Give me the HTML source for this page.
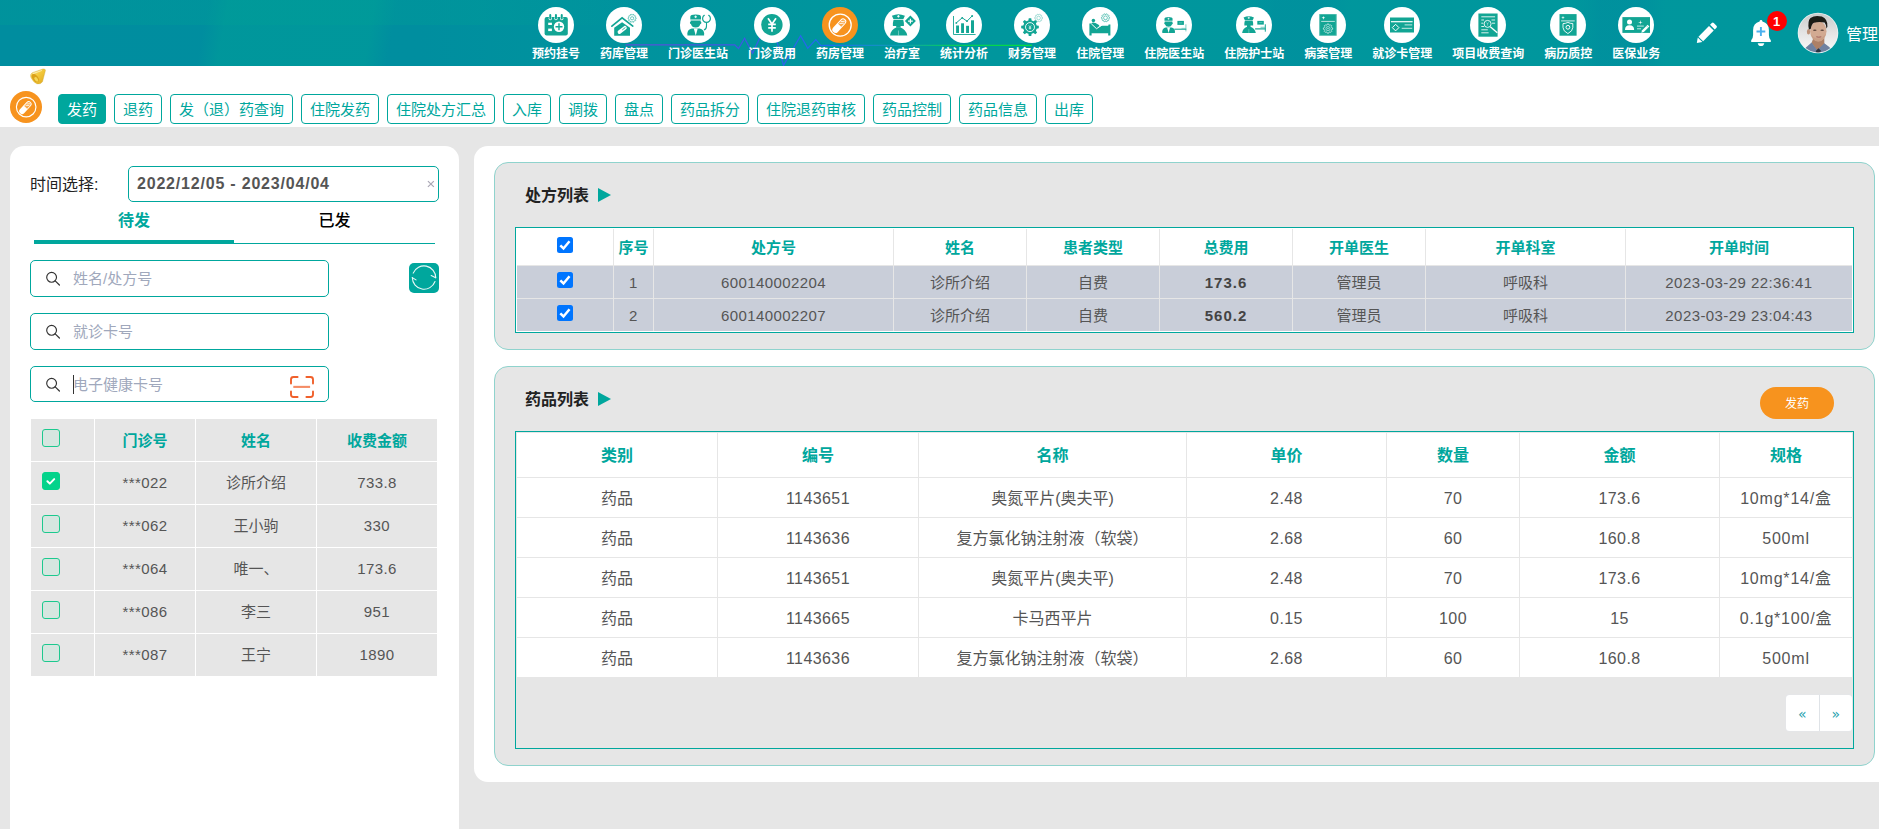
<!DOCTYPE html>
<html lang="zh-CN">
<head>
<meta charset="utf-8">
<title>药房管理 - 发药</title>
<style>
*{box-sizing:border-box;margin:0;padding:0}
html,body{width:1879px;height:829px;overflow:hidden}
body{position:relative;background:#e6e6e6;font-family:"Liberation Sans","Noto Sans CJK SC",sans-serif;font-size:15px;color:#555;line-height:1}
.abs{position:absolute}
/* header */
#hdr{position:absolute;left:0;top:0;width:1879px;height:66px;overflow:hidden;
background:
 linear-gradient(90deg,rgba(0,160,150,.3) 0,rgba(0,160,150,.3) 480px,rgba(0,160,150,0) 640px) 0 0/100% 25px no-repeat,
 linear-gradient(100deg,rgba(0,165,150,0) 205px,rgba(0,165,150,.38) 225px,rgba(0,165,150,.38) 370px,rgba(0,165,150,0) 392px,rgba(0,165,150,0) 100%),
 linear-gradient(90deg,rgba(0,120,160,0) 1240px,rgba(0,120,160,.16) 1275px,rgba(0,120,160,.16) 1315px,rgba(0,120,160,0) 1350px,rgba(0,120,160,0) 1575px,rgba(0,120,160,.18) 1600px,rgba(0,120,160,.18) 1640px,rgba(0,120,160,0) 1665px),
 linear-gradient(90deg,#008d9f 0,#008e9f 420px,#00929e 560px,#00969d 900px,#00979d 1879px);}
#nav{position:absolute;left:522px;top:0;height:66px;display:flex}
.ni{position:relative;padding:0 10px;height:66px;text-align:center}
.ni .c{display:block;width:36px;height:36px;border-radius:50%;background:#fff;margin:7px auto 0}
.ni.on .c{background:#f7931e}
.ni .t{display:block;margin-top:4px;font-size:12px;line-height:14px;font-weight:bold;color:#fff;white-space:nowrap}
.ni svg{display:block;width:36px;height:36px}
/* subnav */
#sub{position:absolute;left:0;top:66px;width:1879px;height:61px;background:#fff}
.sb{position:absolute;top:28px;height:30px;border:1px solid #00a79d;border-radius:4px;color:#00a79d;font-size:15px;line-height:30px;padding:0 8px;white-space:nowrap;background:#fff}
.sb.on{background:#00a79d;color:#fff}
/* panels */
#lp{position:absolute;left:10px;top:146px;width:449px;height:700px;background:#fff;border-radius:14px}
#rp{position:absolute;left:474px;top:146px;width:1420px;height:635.600px;background:#fff;border-radius:14px}
.gp{position:absolute;left:494px;width:1381px;background:#e6e6e6;border:1px solid #8fd3cd;border-radius:14px}
.inp{position:absolute;left:30px;width:299px;height:36px;border:1px solid #00a79d;border-radius:5px;background:#fff}
.inp .ph{position:absolute;left:42px;top:0;line-height:35px;font-size:15px;color:#a0a8bc}
table{border-collapse:separate;border-spacing:0;table-layout:fixed}
td,th{text-align:center;vertical-align:middle;white-space:nowrap;overflow:hidden}

#lt td,#lt th{height:43px;background:#e6e6e6;border-right:1px solid #fff;border-bottom:1px solid #fff;font-size:15px;color:#555;font-weight:normal;position:relative}
#lt th{color:#00a79d;font-weight:bold;height:43px;padding-top:1px}
#lt td{padding-bottom:2px}
#lt th .lcb{top:10px}
#lt tr>*:last-child{border-right:0}
#lt tr:last-child td{border-bottom:0;height:42px}
.lcb{top:10px}
#lt tr>*:first-child{border-left:0}
#lt tr>*:last-child{border-right:0}
#lt tr.h th{border-top:0}
#lt tr:last-child td{border-bottom:0;height:42px}
.lcb{position:absolute;left:11px;top:10px;width:18px;height:18px;border:1px solid #1cc98e;border-radius:3px;background:#d6e6e0}
.lcb.on{background:#04d38b;border-color:#04d38b}
.lcb svg{position:absolute;left:-1px;top:-1px}

.ttl{font-size:16px;line-height:20px;font-weight:bold;color:#222}
.tri{width:0;height:0;border-left:13px solid #00a79d;border-top:7.5px solid transparent;border-bottom:7.5px solid transparent}
.tw{border:1px solid #00a79d;background:#fff}
#rx th{height:37px;background:#fff;color:#00a79d;font-weight:bold;font-size:15px;border-right:1px solid #e6e6e6;border-bottom:1px solid #e6e6e6;position:relative}
#rx td{height:33px;background:#c9ced9;color:#555;font-size:15px;border-right:1px solid #e6e6e6;border-bottom:1px solid #e6e6e6;position:relative}
#rx tr>*:last-child,#dg tr>*:last-child{border-right:0}
#rx tr:last-child td{border-bottom:0;height:32px}
#rx td b{color:#444}
.ncb{position:absolute;left:40px;top:6px;width:16px;height:16px;border-radius:2.5px;background:#0075ff}
#rx th .ncb{top:8px}
.ncb svg{display:block}
#dg th{padding-top:1px;height:45px;background:#fff;color:#00a79d;font-weight:bold;font-size:16px;border-right:1px solid #e6e6e6;border-bottom:1px solid #e6e6e6}
#dg td{padding-top:2px;height:40px;background:#fff;color:#555;font-size:16px;border-right:1px solid #e6e6e6;border-bottom:1px solid #e6e6e6}
#dg tr:last-child td{border-bottom:0;height:39px;padding-top:2px}
.pg{width:66px;height:36.500px;background:#fff;border-radius:3.500px;display:flex;box-shadow:0 0 0 .5px #e3e6ea}
.pg span{flex:1;text-align:center;line-height:39px;font-size:14px;color:#1f9fae;font-family:"DejaVu Sans","Liberation Sans",sans-serif;font-weight:normal}
.pg span+span{border-left:1px solid #dfe3e7}

td.n{letter-spacing:.42px}
#dg td.n:last-child{letter-spacing:.8px}
#rx td.n b{letter-spacing:1px}
</style>
</head>
<body>
<div id="hdr">
<svg class="abs" style="left:0;top:0" width="1879" height="66" viewBox="0 0 1879 66"><defs><linearGradient id="eg" gradientUnits="userSpaceOnUse" x1="625" y1="0" x2="1032" y2="0"><stop offset="0" stop-color="#5b4fd8"/><stop offset=".3" stop-color="#3e56e6"/><stop offset=".5" stop-color="#1d6cf0"/><stop offset=".68" stop-color="#0fa0b0"/><stop offset=".8" stop-color="#06cc5c"/><stop offset="1" stop-color="#04e03c"/></linearGradient></defs><path d="M625.500 44.900H734.700L738.500 48.500L744.600 38.300L752.600 53.300L759.600 38.300L766 24L777.200 42.100L783.500 65.400L800.600 35.700L807.800 48.200L815.800 39.600L820.900 45.600L826 45.300H1032" fill="none" stroke="url(#eg)" stroke-width="1.200" stroke-linejoin="miter"/></svg>
<div id="nav">
<div class="ni"><span class="c"><svg viewBox="0 0 36 36"><!--ic0--><rect x="6.600" y="10.100" width="23.200" height="18.300" rx="2" fill="#12a594"/><g fill="#fff"><rect x="10.600" y="9.500" width="3.300" height="3.700" rx="1.650"/><rect x="16.300" y="9.500" width="3.300" height="3.700" rx="1.650"/><rect x="22.100" y="9.500" width="3.300" height="3.700" rx="1.650"/></g><g fill="#12a594"><rect x="11.250" y="6.900" width="2" height="5.500" rx="1"/><rect x="16.950" y="6.900" width="2" height="5.500" rx="1"/><rect x="22.750" y="6.900" width="2" height="5.500" rx="1"/></g><rect x="10.200" y="15.700" width="3.700" height="2.300" fill="#fff"/><rect x="10.200" y="21.600" width="3.700" height="2.500" fill="#fff"/><circle cx="21" cy="19.800" r="5.200" fill="#fff"/><path d="M21 16.300v7M17.500 19.800h7" stroke="#12a594" stroke-width="1.400"/></svg></span><span class="t">预约挂号</span></div>
<div class="ni"><span class="c"><svg viewBox="0 0 36 36"><!--ic1--><path d="M5.900 19.100L16.100 10.900L26.800 19.100" fill="none" stroke="#12a594" stroke-width="1.700" stroke-linecap="round"/><path d="M16.100 15.300L24 20.700V28.700H8.200V20.700Z" fill="#12a594"/><g transform="rotate(-38 16.150 23)"><rect x="10.900" y="21.100" width="10.600" height="3.800" rx="1.900" fill="#fff"/><path d="M16.300 23h4" stroke="#12a594" stroke-width=".8"/></g><path d="M29.44 10.66L30.17 10.84L30.17 11.76L29.44 11.94L29.18 12.75L29.67 13.32L29.12 14.07L28.43 13.78L27.74 14.28L27.8 15.03L26.92 15.32L26.53 14.67L25.67 14.67L25.28 15.32L24.4 15.03L24.46 14.28L23.77 13.78L23.08 14.07L22.53 13.32L23.02 12.75L22.76 11.94L22.03 11.76L22.03 10.84L22.76 10.66L23.02 9.85L22.53 9.28L23.08 8.53L23.77 8.82L24.46 8.32L24.4 7.57L25.28 7.28L25.67 7.93L26.53 7.93L26.92 7.28L27.8 7.57L27.74 8.32L28.43 8.82L29.12 8.53L29.67 9.28L29.18 9.85Z" fill="#fff" stroke="#12a594" stroke-width=".7" opacity=".85"/><circle cx="26.100" cy="11.300" r="1.600" fill="none" stroke="#12a594" stroke-width=".7" opacity=".85"/></svg></span><span class="t">药库管理</span></div>
<div class="ni"><span class="c"><svg viewBox="0 0 36 36"><!--ic2--><path d="M10.300 12.500V9.700Q10.300 7.400 15.650 7.400Q21 7.400 21 9.700V12.500Z" fill="#12a594"/><path d="M15.650 8.500v2.600M14.350 9.800h2.600" stroke="#fff" stroke-width=".9"/><path d="M10.600 13.400H20.700V14.800Q21.700 15 21.300 16.300Q21 17.100 20.400 17Q19.400 20.500 15.650 20.500Q11.900 20.500 10.900 17Q10.300 17.100 10 16.300Q9.600 15 10.600 14.800Z" fill="#12a594"/><path d="M7.400 28.600V26.300Q7.400 22.800 11.800 21.500H19.700Q24.100 22.800 24.100 26.300V28.600Z" fill="#12a594"/><path d="M13.800 21.400L15.750 28.700L17.700 21.400Z" fill="#fff"/><path d="M24.300 8.300A3.900 3.900 0 1 0 28.700 8.300" fill="none" stroke="#12a594" stroke-width="1.200" stroke-linecap="round"/><path d="M26.500 15.400V19Q26.500 22.200 23.900 23" fill="none" stroke="#12a594" stroke-width="1.100"/></svg></span><span class="t">门诊医生站</span></div>
<div class="ni"><span class="c"><svg viewBox="0 0 36 36"><!--ic3--><circle cx="17.900" cy="17.800" r="10.700" fill="#12a594"/><path d="M14 11.300L18 17L22 11.300M18 17V24.800M14.200 17.400h7.600M14.200 20.900h7.600" stroke="#fff" stroke-width="1.700" fill="none"/></svg></span><span class="t">门诊费用</span></div>
<div class="ni on"><span class="c"><svg viewBox="0 0 36 36"><!--ic4--><circle cx="18.200" cy="18.100" r="11" fill="none" stroke="#fff" stroke-width="1.300"/><g transform="rotate(-47 17.300 18.700)"><rect x="8.600" y="15.500" width="17.400" height="6.400" rx="3.200" fill="#fff"/><path d="M17.800 16.500H22.800Q25 16.500 25 18.700Q25 20.900 22.800 20.900H17.800Z" fill="#f7931e" opacity=".8"/><path d="M19.300 17.600l2.600 2.400M21.600 17.300l2.300 2.100" stroke="#fff" stroke-width=".8" stroke-linecap="round"/></g></svg></span><span class="t">药房管理</span></div>
<div class="ni"><span class="c"><svg viewBox="0 0 36 36"><!--ic5--><path d="M7.900 8.800Q14.400 5.800 20.900 8.800L19.400 12.100H9.400Z" fill="#12a594"/><path d="M14.400 8v2.600M13.100 9.300h2.600" stroke="#fff" stroke-width=".9"/><path d="M9.600 12.800H19.200Q20.200 16 19.900 18.900H16.600V20.800H12.200V18.900H8.900Q8.600 16 9.600 12.800Z" fill="#12a594"/><path d="M6.100 28.400Q7 22.600 12.200 20.600H16.600Q21.800 22.600 23.300 28.400Z" fill="#12a594"/><path d="M14.500 23.500v4.900" stroke="#fff" stroke-width=".45" opacity=".8"/><path d="M26.400 8.600L31.900 14.100L26.400 19.600L20.900 14.100Z" fill="#12a594"/><path d="M26.400 11.700v4.800M24 14.100h4.800" stroke="#fff" stroke-width="1.200"/></svg></span><span class="t">治疗室</span></div>
<div class="ni"><span class="c"><svg viewBox="0 0 36 36"><!--ic6--><path d="M7.500 9V27.500H29.600" fill="none" stroke="#12a594" stroke-width=".9"/><g fill="#12a594"><rect x="10.100" y="18.500" width="2.900" height="7.500"/><rect x="15.100" y="16.300" width="2.900" height="9.700"/><rect x="20.100" y="18.800" width="2.900" height="7.200"/><rect x="25" y="13.300" width="3" height="12.700"/><circle cx="10.300" cy="15.900" r=".9"/><circle cx="16.200" cy="10.800" r=".9"/><circle cx="21" cy="14.200" r=".9"/><circle cx="26.100" cy="9" r="1"/></g><path d="M10.300 15.900L16.200 10.800L21 14.200L26.100 9" fill="none" stroke="#12a594" stroke-width="1"/></svg></span><span class="t">统计分析</span></div>
<div class="ni"><span class="c"><svg viewBox="0 0 36 36"><!--ic7--><path d="M22.71 18.49L24.81 18.85L24.81 21.35L22.71 21.71L21.88 23.71L23.12 25.44L21.34 27.22L19.61 25.98L17.61 26.81L17.25 28.91L14.75 28.91L14.39 26.81L12.39 25.98L10.66 27.22L8.88 25.44L10.12 23.71L9.29 21.71L7.19 21.35L7.19 18.85L9.29 18.49L10.12 16.49L8.88 14.76L10.66 12.98L12.39 14.22L14.39 13.39L14.75 11.29L17.25 11.29L17.61 13.39L19.61 14.22L21.34 12.98L23.12 14.76L21.88 16.49Z" fill="#12a594"/><circle cx="16" cy="20.100" r="4.500" fill="none" stroke="#fff" stroke-width=".9"/><path d="M14.700 18.300L16 20.200L17.300 18.300M16 20.200V22.600M14.800 20.400h2.400M14.800 21.500h2.400" stroke="#fff" stroke-width=".6" fill="none" opacity=".9"/><path d="M27.84 10.38L28.48 10.56L28.48 11.44L27.84 11.62L27.59 12.41L27.99 12.92L27.48 13.63L26.86 13.41L26.19 13.89L26.22 14.55L25.38 14.82L25.01 14.27L24.19 14.27L23.82 14.82L22.98 14.55L23.01 13.89L22.34 13.41L21.72 13.63L21.21 12.92L21.61 12.41L21.36 11.62L20.72 11.44L20.72 10.56L21.36 10.38L21.61 9.59L21.21 9.08L21.72 8.37L22.34 8.59L23.01 8.11L22.98 7.45L23.82 7.18L24.19 7.73L25.01 7.73L25.38 7.18L26.22 7.45L26.19 8.11L26.86 8.59L27.48 8.37L27.99 9.08L27.59 9.59Z" fill="#fff" stroke="#12a594" stroke-width=".6" opacity=".6"/><circle cx="24.600" cy="11" r="1.800" fill="none" stroke="#12a594" stroke-width=".6" opacity=".6"/></svg></span><span class="t">财务管理</span></div>
<div class="ni"><span class="c"><svg viewBox="0 0 36 36"><!--ic8--><path d="M7.400 16.400H9L10.800 15.400L13.500 15.900L17.400 18.200L16.500 19.700L20.400 18.800H26.200L26.600 17.600H28.400V28.400H26.200V26.200H9.600V28.400H7.400Z" fill="#12a594"/><path d="M9.300 16.800L14.500 21.700L19.100 18.700" fill="none" stroke="#fff" stroke-width="1"/><circle cx="11.400" cy="13.500" r="1.750" fill="#12a594"/><path d="M26.84 10.16L27.57 10.34L27.57 11.26L26.84 11.44L26.58 12.25L27.07 12.82L26.52 13.57L25.83 13.28L25.14 13.78L25.2 14.53L24.32 14.82L23.93 14.17L23.07 14.17L22.68 14.82L21.8 14.53L21.86 13.78L21.17 13.28L20.48 13.57L19.93 12.82L20.42 12.25L20.16 11.44L19.43 11.26L19.43 10.34L20.16 10.16L20.42 9.35L19.93 8.78L20.48 8.03L21.17 8.32L21.86 7.82L21.8 7.07L22.68 6.78L23.07 7.43L23.93 7.43L24.32 6.78L25.2 7.07L25.14 7.82L25.83 8.32L26.52 8.03L27.07 8.78L26.58 9.35Z" fill="#fff" stroke="#12a594" stroke-width=".7" opacity=".85"/><circle cx="23.500" cy="10.800" r="1.900" fill="none" stroke="#12a594" stroke-width=".7" opacity=".85"/></svg></span><span class="t">住院管理</span></div>
<div class="ni"><span class="c"><svg viewBox="0 0 36 36"><!--ic9--><g transform="translate(.71 4.31) scale(.755)"><path d="M10.300 12.500V9.700Q10.300 7.400 15.650 7.400Q21 7.400 21 9.700V12.500Z" fill="#12a594"/><path d="M15.650 8.500v2.600M14.350 9.800h2.600" stroke="#fff" stroke-width=".9"/><path d="M10.600 13.400H20.700V14.800Q21.700 15 21.300 16.300Q21 17.100 20.400 17Q19.400 20.500 15.650 20.500Q11.900 20.500 10.900 17Q10.300 17.100 10 16.300Q9.600 15 10.600 14.800Z" fill="#12a594"/><path d="M7.400 28.600V26.300Q7.400 22.800 11.800 21.500H19.700Q24.100 22.800 24.100 26.300V28.600Z" fill="#12a594"/><path d="M13.800 21.400L15.750 28.700L17.700 21.400Z" fill="#fff"/></g><rect x="21.400" y="13.900" width="6.500" height="4" fill="#12a594"/><path d="M23 15.900h3.300" stroke="#fff" stroke-width=".5" opacity=".6"/><path d="M18.300 22.200H30.300" stroke="#12a594" stroke-width="1.100"/><path d="M29.900 17.300V24.400" stroke="#12a594" stroke-width=".9" opacity=".6"/><path d="M25.500 21.300h4" stroke="#12a594" stroke-width=".8" opacity=".45"/></svg></span><span class="t">住院医生站</span></div>
<div class="ni"><span class="c"><svg viewBox="0 0 36 36"><!--ic10--><g transform="translate(1.24 3.38) scale(.8)"><path d="M7.900 8.800Q14.400 5.800 20.900 8.800L19.400 12.100H9.400Z" fill="#12a594"/><path d="M14.400 8v2.600M13.100 9.300h2.600" stroke="#fff" stroke-width=".9"/><path d="M9.600 12.800H19.200Q20.200 16 19.900 18.900H16.600V20.800H12.200V18.900H8.900Q8.600 16 9.600 12.800Z" fill="#12a594"/><path d="M6.100 28.400Q7 22.600 12.200 20.600H16.600Q21.800 22.600 23.300 28.400Z" fill="#12a594"/><path d="M14.500 23.500v4.900" stroke="#fff" stroke-width=".45" opacity=".8"/></g><rect x="21.300" y="13.900" width="6.500" height="3.700" fill="#12a594"/><path d="M23 15.700h3.300" stroke="#fff" stroke-width=".5" opacity=".6"/><path d="M19.100 21.900H29.600" stroke="#12a594" stroke-width="1.200"/><path d="M29.300 17.300V24.700" stroke="#12a594" stroke-width="1"/><path d="M24.500 20.400h4.500" stroke="#12a594" stroke-width="1.400" opacity=".45"/></svg></span><span class="t">住院护士站</span></div>
<div class="ni"><span class="c"><svg viewBox="0 0 36 36"><!--ic11--><rect x="9.300" y="7.100" width="17.300" height="21.600" fill="#12a594"/><rect x="9.900" y="7.700" width="16.100" height="20.400" fill="none" stroke="#fff" stroke-width=".4" opacity=".35"/><path d="M13.4 8.9L13.83 10.37L15.3 10.8L13.83 11.23L13.4 12.7L12.97 11.23L11.5 10.8L12.97 10.37Z" fill="#fff"/><path d="M11.200 14.400H24.800" stroke="#fff" stroke-width=".9" opacity=".8"/><path d="M21.7 20.71L22.65 20.94L22.65 22.26L21.7 22.49L21.24 23.59L21.76 24.42L20.82 25.36L19.99 24.84L18.89 25.3L18.66 26.25L17.34 26.25L17.11 25.3L16.01 24.84L15.18 25.36L14.24 24.42L14.76 23.59L14.3 22.49L13.35 22.26L13.35 20.94L14.3 20.71L14.76 19.61L14.24 18.78L15.18 17.84L16.01 18.36L17.11 17.9L17.34 16.95L18.66 16.95L18.89 17.9L19.99 18.36L20.82 17.84L21.76 18.78L21.24 19.61Z" fill="none" stroke="#fff" stroke-width=".7" opacity=".85"/><circle cx="18" cy="21.600" r="2.100" fill="none" stroke="#fff" stroke-width=".6" opacity=".85"/><path d="M18 20.600L19 21.600L18 22.600L17 21.600Z" fill="#fff" opacity=".6"/></svg></span><span class="t">病案管理</span></div>
<div class="ni"><span class="c"><svg viewBox="0 0 36 36"><!--ic12--><rect x="6" y="10.500" width="24" height="15" fill="#12a594"/><path d="M6.900 14.700H28.600" stroke="#fff" stroke-width="1.200"/><path d="M11.600 17.300L14.900 20.600L11.600 23.900L8.300 20.600Z" fill="none" stroke="#fff" stroke-width="1"/><path d="M20.600 17.900H28.200M17.700 21.300H28.200" stroke="#fff" stroke-width="1" opacity=".75"/></svg></span><span class="t">就诊卡管理</span></div>
<div class="ni"><span class="c"><svg viewBox="0 0 36 36"><!--ic13--><rect x="8.400" y="6.500" width="19.200" height="23.200" fill="#12a594"/><path d="M11.300 9.800H25.100M11.300 13H14M21.500 13H25.100M11.300 16.200H13.300M22 16.200H25.100M11.300 19.500H14M11.300 22.800H17.800M11.300 25.800H18.600" stroke="#fff" stroke-width="1" opacity=".85"/><circle cx="17.600" cy="16.900" r="3.500" fill="#12a594" stroke="#fff" stroke-width=".9"/><path d="M16.700 15.500L17.600 16.900L18.500 15.500M17.600 16.900V18.700" stroke="#fff" stroke-width=".5" fill="none" opacity=".8"/><path d="M20.300 19.800L27.300 25.700" stroke="#fff" stroke-width="1.300"/></svg></span><span class="t">项目收费查询</span></div>
<div class="ni"><span class="c"><svg viewBox="0 0 36 36"><!--ic14--><rect x="9.500" y="7.100" width="17.100" height="21.600" fill="#12a594"/><path d="M13 8.7L13.43 10.17L14.9 10.6L13.43 11.03L13 12.5L12.57 11.03L11.1 10.6L12.57 10.17Z" fill="#fff"/><path d="M11.100 13.900H24.700" stroke="#fff" stroke-width="1.100" opacity=".75"/><path d="M17.900 15.400Q20.300 16.600 22.800 16.600V20.500Q22.800 24 17.900 26.600Q13 24 13 20.500V16.600Q15.500 16.600 17.900 15.400Z" fill="none" stroke="#fff" stroke-width=".9"/><circle cx="17.900" cy="20.300" r="1.900" fill="none" stroke="#fff" stroke-width="1"/></svg></span><span class="t">病历质控</span></div>
<div class="ni"><span class="c"><svg viewBox="0 0 36 36"><!--ic15--><rect x="4.400" y="10.100" width="27.600" height="15.800" fill="#12a594"/><circle cx="11.500" cy="15.100" r="2.500" fill="#fff"/><path d="M7 22.900Q7 18.300 11.550 18.300Q16.100 18.300 16.100 22.900Z" fill="#fff"/><path d="M22.4 13L22.79 15.01L24.8 15.4L22.79 15.79L22.4 17.8L22.01 15.79L20 15.4L22.01 15.01Z" fill="#fff"/><path d="M19 19.100H25.800M19 21.800H23.100" stroke="#fff" stroke-width="1" opacity=".75"/><path d="M23.300 25.700L24.100 23.200L29.600 17.700L31.400 19.500L25.900 25Z" fill="#fff"/><path d="M28.500 18.800L30.300 20.600" stroke="#12a594" stroke-width=".4"/></svg></span><span class="t">医保业务</span></div>
</div>

<svg class="abs" style="left:1690px;top:16px" width="32" height="32" viewBox="0 0 32 32"><g transform="translate(6.800 27.100) rotate(-45.600)" fill="#fff"><path d="M0 0L4.700 -3.200V3.200Z"/><path d="M5.700 -3.300H20.800V3.300H5.700Z"/><path d="M22.300 -3.300H24.800Q26.200 -3.300 26.200 -1.900V1.900Q26.200 3.300 24.800 3.300H22.300Z"/></g></svg>
<svg class="abs" style="left:1751px;top:20px" width="20" height="27" viewBox="0 0 20 27"><path d="M10 0Q11.400 0 11.400 1.400Q17.900 3 17.900 10V15Q17.900 18.300 19.800 20.300V22H.2V20.300Q2.100 18.300 2.100 15V10Q2.100 3 8.600 1.400Q8.600 0 10 0Z" fill="#fff"/><path d="M6.700 23.200H13.300Q12.600 26.100 10 26.100Q7.400 26.100 6.700 23.200Z" fill="#fff"/><path d="M9.900 7.100v8.900M5.500 11.500h8.800" stroke="#4bb0ee" stroke-width="1.900"/></svg>
<div class="abs" style="left:1767px;top:11px;width:20px;height:20px;border-radius:50%;background:#ff0000;color:#fff;font-weight:bold;font-size:13px;line-height:22px;text-align:center;padding-right:1px">1</div>
<svg class="abs" style="left:1797px;top:12px" width="42" height="42" viewBox="0 0 42 42"><defs><clipPath id="av"><circle cx="21" cy="21" r="19.500"/></clipPath><linearGradient id="avg" x1="0" y1="0" x2="0" y2="1"><stop offset="0" stop-color="#c9c9c9"/><stop offset=".5" stop-color="#e4e4e4"/><stop offset="1" stop-color="#fcfcfc"/></linearGradient><filter id="avb" x="-10%" y="-10%" width="120%" height="120%"><feGaussianBlur stdDeviation=".45"/></filter></defs><circle cx="21" cy="21" r="20.300" fill="#e8f4f5"/><g clip-path="url(#av)"><rect width="42" height="42" fill="url(#avg)"/><g filter="url(#avb)"><path d="M16.400 26h10.900v6l-6.800 7.500l-6 -8.500Z" fill="#ad8066"/><path d="M4 42L8.900 35.400L14.600 30.400L20.200 38.300L27.300 31.300L32.300 35L37.500 42Z" fill="#6f81a0"/><path d="M18.800 39L21.400 36.300L24 38.800L22.500 42H19Z" fill="#2b3442"/><ellipse cx="11.500" cy="19.800" rx="1.600" ry="2.800" fill="#bd9076"/><ellipse cx="21.300" cy="19.300" rx="8.200" ry="10.200" fill="#d2aa92"/><path d="M14 22Q15 28.500 21.300 29.500Q27.500 28.500 28.800 22Q25 26.500 21.300 26.500Q17 26.500 14 22Z" fill="#c49a82" opacity=".7"/><path d="M11.900 17.500Q10.300 9 13.500 6Q18 2.800 24.800 4.600Q30.800 6.800 30.400 14.800L29.500 16.500Q29.200 12.500 27.600 10.600Q22 9.300 17 10.800Q14.500 12 13.700 17Z" fill="#1c1a18"/><ellipse cx="17.800" cy="18.300" rx="1.800" ry=".7" fill="#4a3730" opacity=".85"/><ellipse cx="25.200" cy="18.300" rx="1.800" ry=".7" fill="#4a3730" opacity=".85"/><path d="M19.300 24.800Q21.800 25.600 24.300 24.800" stroke="#a0605a" stroke-width="1" fill="none"/></g></g></svg>
<div class="abs" style="left:1846px;top:23px;font-size:16px;line-height:24px;color:#fff;white-space:nowrap">管理员</div>
</div>
<div id="sub">
<svg class="abs" style="left:29px;top:2px" width="18" height="17" viewBox="0 0 18 17"><defs><linearGradient id="bg1" x1="0" y1="0" x2="1" y2="1"><stop offset="0" stop-color="#fbe79a"/><stop offset=".45" stop-color="#f3c93c"/><stop offset="1" stop-color="#e0a71c"/></linearGradient></defs><path d="M15.900 1.300Q17 1.800 16.200 3.500L13.500 13.800Q11.500 16.600 7.800 15.800Q4 14 1.800 9.200Q.8 6.200 3.200 4.700L13.800 1Q15 .7 15.900 1.300Z" fill="url(#bg1)" stroke="#c9a53c" stroke-width=".5" stroke-opacity=".7"/><ellipse cx="6.300" cy="10" rx="4.700" ry="2.700" transform="rotate(52 6.300 10)" fill="#dba21a"/><ellipse cx="7.300" cy="11.300" rx="2.600" ry="1.500" transform="rotate(52 7.300 11.300)" fill="#f5d655"/><path d="M4.300 5.500L12.500 2.600" stroke="#fdf3c4" stroke-width="1" stroke-linecap="round" opacity=".8"/></svg>
<div class="abs" style="left:10px;top:25px;width:32px;height:32px;border-radius:50%;background:#f7931e"><svg width="32" height="32" viewBox="0 0 36 36"><circle cx="18.200" cy="18.100" r="11" fill="none" stroke="#fff" stroke-width="1.300"/><g transform="rotate(-47 17.300 18.700)"><rect x="8.600" y="15.500" width="17.400" height="6.400" rx="3.200" fill="#fff"/><path d="M17.800 16.500H22.800Q25 16.500 25 18.700Q25 20.900 22.800 20.900H17.800Z" fill="#f7931e" opacity=".8"/><path d="M19.300 17.600l2.600 2.400M21.600 17.300l2.300 2.100" stroke="#fff" stroke-width=".8" stroke-linecap="round"/></g></svg></div>
<div class="sb on" style="left:58px">发药</div>
<div class="sb" style="left:114px">退药</div>
<div class="sb" style="left:170px">发（退）药查询</div>
<div class="sb" style="left:301px">住院发药</div>
<div class="sb" style="left:387px">住院处方汇总</div>
<div class="sb" style="left:503px">入库</div>
<div class="sb" style="left:559px">调拨</div>
<div class="sb" style="left:615px">盘点</div>
<div class="sb" style="left:671px">药品拆分</div>
<div class="sb" style="left:757px">住院退药审核</div>
<div class="sb" style="left:873px">药品控制</div>
<div class="sb" style="left:959px">药品信息</div>
<div class="sb" style="left:1045px">出库</div>
</div>
<div id="lp">
<div class="abs" style="left:20px;top:30px;font-size:16px;line-height:18px;color:#222">时间选择:</div>
<div class="abs" style="left:118px;top:20px;width:311px;height:36px;border:1px solid #00a79d;border-radius:5px;background:#fff">
 <span class="abs" style="left:8px;top:0;line-height:34px;font-size:16px;font-weight:bold;color:#555;letter-spacing:.8px">2022/12/05 - 2023/04/04</span>
 <span class="abs" style="left:296px;top:0;width:12px;line-height:34px;font-size:15px;font-weight:normal;color:#a9a6b4;text-align:center;transform:scaleY(.92)">×</span>
</div>
<div class="abs" style="left:24px;top:63px;width:200px;text-align:center;font-size:16px;line-height:24px;font-weight:bold;color:#00a79d">待发</div>
<div class="abs" style="left:224px;top:63px;width:201px;text-align:center;font-size:16px;line-height:24px;font-weight:500;color:#000">已发</div>
<div class="abs" style="left:24px;top:97px;width:401px;height:1px;background:#00a79d"></div>
<div class="abs" style="left:24px;top:94px;width:200px;height:4px;background:#00a79d"></div>
<div class="inp" style="left:20px;top:114px;height:37px"><svg class="abs" style="left:14px;top:10px" width="16" height="16" viewBox="0 0 16 16"><circle cx="6.600" cy="6.300" r="4.900" fill="none" stroke="#333" stroke-width="1.150"/><path d="M10.200 9.900L14.400 14" stroke="#333" stroke-width="1.200" stroke-linecap="round"/></svg><span class="ph">姓名/处方号</span></div>
<div class="inp" style="left:20px;top:167px;height:37px"><svg class="abs" style="left:14px;top:10px" width="16" height="16" viewBox="0 0 16 16"><circle cx="6.600" cy="6.300" r="4.900" fill="none" stroke="#333" stroke-width="1.150"/><path d="M10.200 9.900L14.400 14" stroke="#333" stroke-width="1.200" stroke-linecap="round"/></svg><span class="ph">就诊卡号</span></div>
<div class="inp" style="left:20px;top:220px"><svg class="abs" style="left:14px;top:10px" width="16" height="16" viewBox="0 0 16 16"><circle cx="6.600" cy="6.300" r="4.900" fill="none" stroke="#333" stroke-width="1.150"/><path d="M10.200 9.900L14.400 14" stroke="#333" stroke-width="1.200" stroke-linecap="round"/></svg><span class="abs" style="left:42px;top:8px;width:1px;height:19px;background:#333"></span><span class="ph">电子健康卡号</span>
 <svg class="abs" style="left:258px;top:8px" width="27" height="24" viewBox="0 0 27 24" fill="none" stroke="#f0602b" stroke-width="1.900" stroke-linecap="round" stroke-linejoin="round"><path d="M2 8.600V4.500Q2 2 4.500 2H8.600M17.400 2h4.100Q24 2 24 4.500V8.600M24 16.400v3.100Q24 22 21.500 22H17.400M8.600 22H4.500Q2 22 2 19.500V16.400"/><path d="M4.300 11.900h16.800" opacity=".72" stroke-linecap="butt" stroke-width="2.100"/></svg>
</div>
<div class="abs" style="left:399px;top:117px;width:30px;height:30px;border-radius:5px;background:#00a79d">
 <svg width="30" height="30" viewBox="0 0 30 30" fill="none" stroke="#fff" stroke-width="1.100" stroke-linecap="round" stroke-linejoin="round" opacity=".92"><path d="M4.200 10.100A11.700 11.700 0 0 1 26.700 14.800"/><path d="M26 18.500A11.700 11.700 0 0 1 3.300 14.600"/><path d="M22.200 12.500L26.700 14.800"/><path d="M3.300 14.600L7 16.900"/></svg>
</div>
<table id="lt" class="abs" style="left:21px;top:273px;width:406px"><colgroup><col style="width:64px"><col style="width:101px"><col style="width:121px"><col style="width:120px"></colgroup><tr class="h"><th><span class="lcb"></span></th><th>门诊号</th><th>姓名</th><th>收费金额</th></tr><tr><td><span class="lcb on"><svg width="18" height="18" viewBox="0 0 18 18"><path d="M5.400 9.300l2.400 2.300l4.400 -4.500" fill="none" stroke="#fff" stroke-width="2" stroke-linecap="round" stroke-linejoin="round"/></svg></span></td><td class="n">***022</td><td>诊所介绍</td><td class="n">733.8</td></tr><tr><td><span class="lcb"></span></td><td class="n">***062</td><td>王小驹</td><td class="n">330</td></tr><tr><td><span class="lcb"></span></td><td class="n">***064</td><td>唯一、</td><td class="n">173.6</td></tr><tr><td><span class="lcb"></span></td><td class="n">***086</td><td>李三</td><td class="n">951</td></tr><tr><td><span class="lcb"></span></td><td class="n">***087</td><td>王宁</td><td class="n">1890</td></tr></table></div>
<div id="rp"></div>
<div class="gp" style="top:162px;height:188px"></div>
<div class="abs ttl" style="left:525px;top:186px">处方列表</div><div class="abs tri" style="left:598px;top:187.500px"></div>
<div class="abs tw" style="left:515px;top:227px;width:1339px;height:106px"></div>
<table id="rx" class="abs" style="left:517px;top:229px;width:1335px"><colgroup><col style="width:97px"><col style="width:40px"><col style="width:240px"><col style="width:133px"><col style="width:133px"><col style="width:133px"><col style="width:133px"><col style="width:200px"><col style="width:226px"></colgroup><tr class="h"><th><span class="ncb"><svg width="16" height="16" viewBox="0 0 16 16"><path d="M3.300 8.400l3.200 3.100l6 -7.200" fill="none" stroke="#fff" stroke-width="2.500"/></svg></span></th><th>序号</th><th>处方号</th><th>姓名</th><th>患者类型</th><th>总费用</th><th>开单医生</th><th>开单科室</th><th>开单时间</th></tr><tr><td><span class="ncb"><svg width="16" height="16" viewBox="0 0 16 16"><path d="M3.300 8.400l3.200 3.100l6 -7.200" fill="none" stroke="#fff" stroke-width="2.500"/></svg></span></td><td class="n">1</td><td class="n">600140002204</td><td>诊所介绍</td><td>自费</td><td class="n"><b>173.6</b></td><td>管理员</td><td>呼吸科</td><td class="n">2023-03-29 22:36:41</td></tr><tr><td><span class="ncb"><svg width="16" height="16" viewBox="0 0 16 16"><path d="M3.300 8.400l3.200 3.100l6 -7.200" fill="none" stroke="#fff" stroke-width="2.500"/></svg></span></td><td class="n">2</td><td class="n">600140002207</td><td>诊所介绍</td><td>自费</td><td class="n"><b>560.2</b></td><td>管理员</td><td>呼吸科</td><td class="n">2023-03-29 23:04:43</td></tr></table>
<div class="gp" style="top:366px;height:400px"></div>
<div class="abs ttl" style="left:525px;top:390px">药品列表</div><div class="abs tri" style="left:598px;top:391.500px"></div>
<div class="abs" style="left:1760px;top:387px;width:74px;height:32px;border-radius:16px;background:#f7931e;color:#fff;font-size:12px;line-height:34px;text-align:center">发药</div>
<div class="abs tw" style="left:515px;top:431px;width:1339px;height:318px;background:#e6e6e6"></div>
<table id="dg" class="abs" style="left:517px;top:433px;width:1335px"><colgroup><col style="width:201px"><col style="width:201px"><col style="width:268px"><col style="width:200px"><col style="width:133px"><col style="width:200px"><col style="width:132px"></colgroup><tr class="h"><th>类别</th><th>编号</th><th>名称</th><th>单价</th><th>数量</th><th>金额</th><th>规格</th></tr><tr><td>药品</td><td class="n">1143651</td><td>奥氮平片(奥夫平)</td><td class="n">2.48</td><td class="n">70</td><td class="n">173.6</td><td class="n">10mg*14/盒</td></tr><tr><td>药品</td><td class="n">1143636</td><td>复方氯化钠注射液（软袋）</td><td class="n">2.68</td><td class="n">60</td><td class="n">160.8</td><td class="n">500ml</td></tr><tr><td>药品</td><td class="n">1143651</td><td>奥氮平片(奥夫平)</td><td class="n">2.48</td><td class="n">70</td><td class="n">173.6</td><td class="n">10mg*14/盒</td></tr><tr><td>药品</td><td class="n">1143665</td><td>卡马西平片</td><td class="n">0.15</td><td class="n">100</td><td class="n">15</td><td class="n">0.1g*100/盒</td></tr><tr><td>药品</td><td class="n">1143636</td><td>复方氯化钠注射液（软袋）</td><td class="n">2.68</td><td class="n">60</td><td class="n">160.8</td><td class="n">500ml</td></tr></table>
<div class="abs pg" style="left:1786px;top:694.600px"><span>«</span><span>»</span></div>

</body>
</html>
